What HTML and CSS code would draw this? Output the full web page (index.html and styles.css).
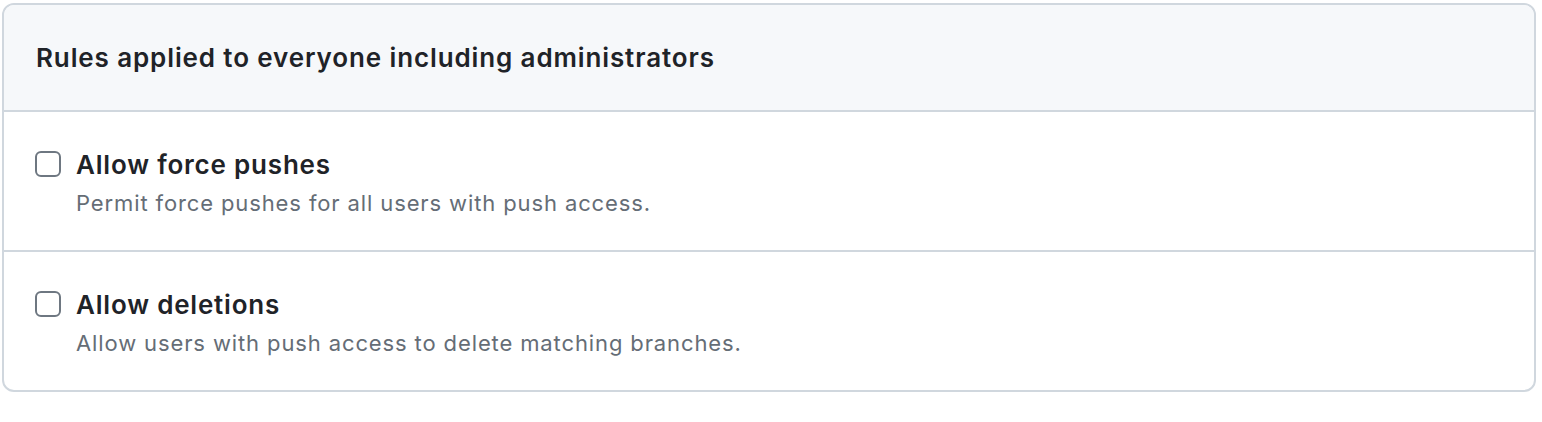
FILE: index.html
```html
<!DOCTYPE html>
<html>
<head>
<meta charset="utf-8">
<link rel="stylesheet" href="styles.css">
</head>
<body>
<div class="box">
  <div class="box-header">
    <h3 class="box-title">Rules applied to everyone including administrators</h3>
  </div>
  <div class="box-row">
    <label class="option">
      <span class="checkbox"></span>
      <span class="option-text">
        <span class="option-title">Allow force pushes</span>
        <span class="option-desc">Permit force pushes for all users with push access.</span>
      </span>
    </label>
  </div>
  <div class="box-row">
    <label class="option">
      <span class="checkbox"></span>
      <span class="option-text">
        <span class="option-title">Allow deletions</span>
        <span class="option-desc">Allow users with push access to delete matching branches.</span>
      </span>
    </label>
  </div>
</div>
</body>
</html>
```
FILE: styles.css
```css
html, body {
  margin: 0;
  padding: 0;
  background: #ffffff;
}
body {
  font-family: Inter, "Noto Sans", "Liberation Sans", sans-serif;
  color: #1f2328;
  padding: 3px 0 0 2px;
}
.box {
  width: 1534px;
  box-sizing: border-box;
  border: 2px solid #d0d7de;
  border-radius: 12px;
  overflow: hidden;
}
.box-header {
  background: #f6f8fa;
  height: 107px;
  box-sizing: border-box;
  border-bottom: 2px solid #d0d7de;
  display: flex;
  align-items: center;
  padding: 0 32px 0 32px;
}
.box-title {
  margin: 0;
  font-size: 26px;
  font-weight: 600;
  letter-spacing: 0.88px;
}
.box-row {
  height: 140px;
  box-sizing: border-box;
  padding: 38px 32px 0 31px;
  border-bottom: 2px solid #d0d7de;
}
.box-row:last-child {
  border-bottom: none;
  height: 138px;
}
.option {
  display: flex;
  gap: 15px;
  align-items: flex-start;
}
.checkbox {
  width: 26px;
  height: 26px;
  box-sizing: border-box;
  border: 2px solid #6e7781;
  border-radius: 6px;
  margin-top: 1px;
  flex: none;
}
.option-text {
  display: flex;
  flex-direction: column;
}
.option-title {
  font-size: 26px;
  font-weight: 600;
  line-height: 30px;
  letter-spacing: 0.8px;
}
.option-desc {
  font-size: 22px;
  color: #656d76;
  line-height: 30px;
  margin-top: 8px;
  letter-spacing: 0.88px;
}
```
